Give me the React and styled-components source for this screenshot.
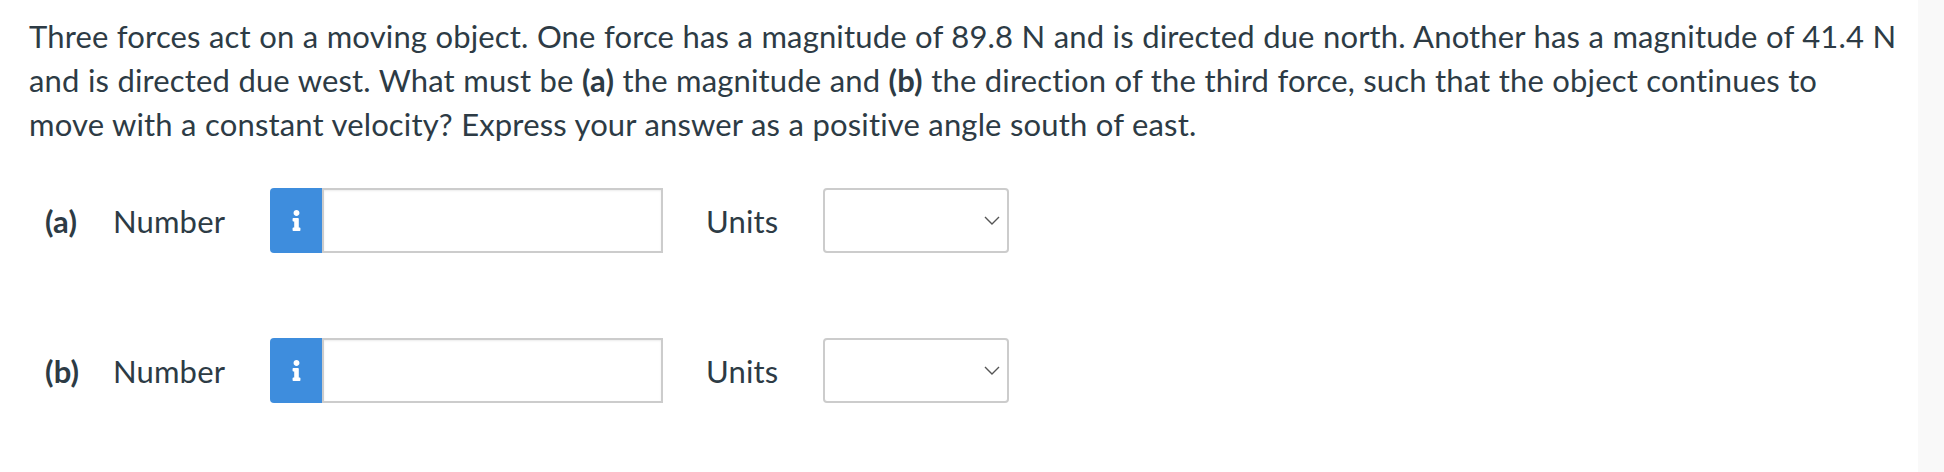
import styled, { createGlobalStyle } from 'styled-components';
import { FaInfo } from 'react-icons/fa';

const GlobalStyle = createGlobalStyle`
  html, body {
    margin: 0;
    padding: 0;
    background: #ffffff;
  }
  body {
    font-family: Lato, 'Noto Sans', sans-serif;
    color: #2d3b45;
  }
`;

const parts = ['a', 'b'];

const App = () => {
  return (
    <>
      <GlobalStyle />
      <Page>
        <Main>
          <Question>
            Three forces act on a moving object. One force has a magnitude of 89.8 N and is directed
            due north. Another has a magnitude of 41.4 N<br />
            and is directed due west. What must be <b>(a)</b> the magnitude and <b>(b)</b> the
            direction of the third force, such that the object continues to
            <br />
            move with a constant velocity? Express your answer as a positive angle south of east.
          </Question>
          <Answers>
            {parts.map((part) => (
              <AnswerRow key={part}>
                <PartLabel>({part})</PartLabel>
                <FieldLabel>Number</FieldLabel>
                <InputGroup>
                  <InfoAddon>
                    <FaInfo size={21} />
                  </InfoAddon>
                  <NumberInput type="text" />
                </InputGroup>
                <UnitsLabel>Units</UnitsLabel>
                <UnitsSelect>
                  <svg width="16" height="9" viewBox="0 0 16 9">
                    <path d="M1 1l7 7 7-7" fill="none" stroke="#555" strokeWidth="1.4" />
                  </svg>
                </UnitsSelect>
              </AnswerRow>
            ))}
          </Answers>
        </Main>
        <SideStrip />
      </Page>
    </>
  );
};

const Page = styled.div`
  display: flex;
  flex-direction: row;
  width: 100%;
  min-height: 472px;
`;

const Main = styled.div`
  flex: 1;
  padding: 14px 0 0 29px;
`;

const SideStrip = styled.div`
  width: 26px;
  background-color: #f9f9f9;
`;

const Question = styled.p`
  margin: 0;
  font-size: 31px;
  line-height: 44px;
  letter-spacing: 0.15px;
  word-spacing: 0.3px;

  b {
    font-weight: 700;
  }
`;

const Answers = styled.div`
  display: flex;
  flex-direction: column;
  gap: 85px;
  margin-top: 42px;
`;

const AnswerRow = styled.div`
  display: flex;
  flex-direction: row;
  align-items: center;
  height: 65px;
  font-size: 31px;
  letter-spacing: 0.15px;
`;

const PartLabel = styled.span`
  font-weight: 700;
  width: 68px;
  margin-left: 16px;
`;

const FieldLabel = styled.span`
  width: 157px;
`;

const InputGroup = styled.div`
  display: flex;
  flex-direction: row;
  height: 65px;
`;

const InfoAddon = styled.div`
  width: 52px;
  height: 100%;
  background-color: #3e8ddd;
  border-radius: 4px 0 0 4px;
  color: #ffffff;
  display: flex;
  align-items: center;
  justify-content: center;
  box-sizing: border-box;
`;

const NumberInput = styled.input`
  width: 341px;
  height: 100%;
  box-sizing: border-box;
  border: 2px solid #cccccc;
  border-radius: 0;
  box-shadow: inset 0 1px 2px rgba(0, 0, 0, 0.08);
  margin: 0;
  padding: 0 10px;
  font-size: 31px;
  outline: none;
`;

const UnitsLabel = styled.span`
  width: 117px;
  margin-left: 43px;
`;

const UnitsSelect = styled.div`
  width: 186px;
  height: 65px;
  box-sizing: border-box;
  border: 2px solid #cccccc;
  border-radius: 4px;
  display: flex;
  align-items: center;
  justify-content: flex-end;
  padding-right: 7px;
`;

export default App;
